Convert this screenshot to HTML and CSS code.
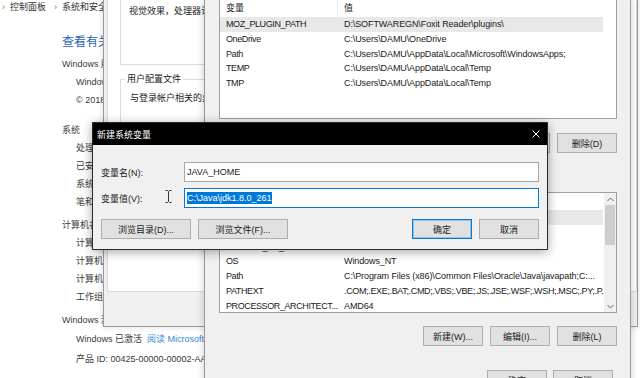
FILE: index.html
```html
<!DOCTYPE html>
<html lang="zh-CN">
<head>
  <meta charset="UTF-8">
  <meta name="viewport" content="width=device-width, initial-scale=1.0">
  <title>新建系统变量</title>
  <link rel="stylesheet" href="styles.css">
</head>
<body>

<!-- control panel page in the background -->
<div class="cp">
  <div class="crumbs"><span class="sep">›</span>控制面板<span class="sep">›</span>系统和安全<span class="sep">›</span>系统</div>
  <div class="cp-main">
    <h1>查看有关计算机的基本信息</h1>
    <div class="sec sec-win">
      <div class="sec-title">Windows 版本</div>
      <div class="item">Windows 10 专业版</div>
      <div class="item">© 2018 Microsoft Corporation。保留所有权利。</div>
    </div>
    <div class="sec sec-sys">
      <div class="sec-title">系统</div>
      <div class="item">处理器：</div>
      <div class="item">已安装的内存(RAM)：</div>
      <div class="item">系统类型：</div>
      <div class="item">笔和触控：</div>
    </div>
    <div class="sec sec-name">
      <div class="sec-title">计算机名、域和工作组设置</div>
      <div class="item">计算机名：</div>
      <div class="item">计算机全名：</div>
      <div class="item">计算机描述：</div>
      <div class="item">工作组：</div>
    </div>
    <div class="sec sec-act">
      <div class="sec-title">Windows 激活</div>
      <div class="item tall">Windows 已激活 &nbsp;<span class="link">阅读 Microsoft 软件许可条款</span></div>
      <div class="item tall">产品 ID: 00425-00000-00002-AA000</div>
    </div>
  </div>
</div>

<!-- system properties -->
<div class="win sysprops">
  <div class="tabpage">
    <div class="group group-top">
      <div class="group-text">视觉效果，处理器计划，内存使用，以及虚拟内存</div>
    </div>
    <fieldset class="group-set">
      <legend>用户配置文件</legend>
      <div class="group-text">与登录帐户相关的桌面设置</div>
    </fieldset>
  </div>
</div>

<!-- environment variables -->
<div class="win envvars">
  <div class="list list-user">
    <div class="row head"><span class="c1">变量</span><span class="c2">值</span></div>
    <div class="row sel"><span class="c1">MOZ_PLUGIN_PATH</span><span class="c2">D:\SOFTWAREGN\Foxit Reader\plugins\</span></div>
    <div class="row"><span class="c1">OneDrive</span><span class="c2">C:\Users\DAMU\OneDrive</span></div>
    <div class="row"><span class="c1">Path</span><span class="c2">C:\Users\DAMU\AppData\Local\Microsoft\WindowsApps;</span></div>
    <div class="row"><span class="c1">TEMP</span><span class="c2">C:\Users\DAMU\AppData\Local\Temp</span></div>
    <div class="row"><span class="c1">TMP</span><span class="c2">C:\Users\DAMU\AppData\Local\Temp</span></div>
  </div>
  <div class="btns">
    <button class="btn">新建(N)...</button>
    <button class="btn">编辑(E)...</button>
    <button class="btn">删除(D)</button>
  </div>
  <div class="env-label">系统变量(S)</div>
  <div class="list list-sys">
    <div class="list-body">
      <div class="row head"><span class="c1">变量</span><span class="c2">值</span></div>
      <div class="row sel"><span class="c1">ComSpec</span><span class="c2">C:\WINDOWS\system32\cmd.exe</span></div>
      <div class="row"><span class="c1">DriverData</span><span class="c2">C:\Windows\System32\Drivers\DriverData</span></div>
      <div class="row"><span class="c1">NUMBER_OF_PROCESSORS</span><span class="c2">4</span></div>
      <div class="row"><span class="c1">OS</span><span class="c2">Windows_NT</span></div>
      <div class="row"><span class="c1">Path</span><span class="c2">C:\Program Files (x86)\Common Files\Oracle\Java\javapath;C:...</span></div>
      <div class="row"><span class="c1">PATHEXT</span><span class="c2 tight">.COM;.EXE;.BAT;.CMD;.VBS;.VBE;.JS;.JSE;.WSF;.WSH;.MSC;.PY;.P...</span></div>
      <div class="row"><span class="c1">PROCESSOR_ARCHITECT...</span><span class="c2">AMD64</span></div>
    </div>
    <div class="vscroll">
      <div class="arrow"><svg width="7" height="5" viewBox="0 0 7 5"><path d="M0.5 4 L3.5 1 L6.5 4" fill="none" stroke="#606060" stroke-width="1"/></svg></div>
      <div class="thumb"></div>
      <div class="track"></div>
      <div class="arrow"><svg width="7" height="5" viewBox="0 0 7 5"><path d="M0.5 1 L3.5 4 L6.5 1" fill="none" stroke="#606060" stroke-width="1"/></svg></div>
    </div>
  </div>
  <div class="btns">
    <button class="btn">新建(W)...</button>
    <button class="btn">编辑(I)...</button>
    <button class="btn">删除(L)</button>
  </div>
  <div class="btns btns-bottom">
    <button class="btn">确定</button>
    <button class="btn">取消</button>
  </div>
</div>

<!-- new system variable dialog -->
<div class="dlg">
  <div class="dlg-title">
    <span>新建系统变量</span>
    <span class="close"><svg width="8" height="8" viewBox="0 0 8 8"><path d="M0.5 0.5 L7.5 7.5 M7.5 0.5 L0.5 7.5" stroke="#fff" stroke-width="1"/></svg></span>
  </div>
  <div class="dlg-body">
    <div class="field-row">
      <span class="field-label">变量名(N):</span>
      <div class="field">JAVA_HOME</div>
    </div>
    <div class="field-row row-value">
      <span class="field-label">变量值(V):</span>
      <div class="field focus"><span class="selected">C:\Java\jdk1.8.0_261</span></div>
      <svg class="ibeam" width="7" height="13" viewBox="0 0 7 13"><path d="M0.5 0.5 H2.5 L3.5 1.5 L4.5 0.5 H6.5 M3.5 1.5 V11.5 M0.5 12.5 H2.5 L3.5 11.5 L4.5 12.5 H6.5" fill="none" stroke="#333" stroke-width="1"/></svg>
    </div>
    <div class="dlg-btns">
      <button class="btn wide">浏览目录(D)...</button>
      <button class="btn wide">浏览文件(F)...</button>
      <span class="spacer"></span>
      <button class="btn default">确定</button>
      <button class="btn">取消</button>
    </div>
  </div>
</div>

</body>
</html>
```

FILE: styles.css
```css
body {
  margin: 0;
  width: 640px;
  height: 378px;
  overflow: hidden;
  position: relative;
  background: #fff;
  font-family: "Liberation Sans", "Noto Sans CJK SC", sans-serif;
  font-size: 9px;
  color: #1a1a1a;
}

/* control panel */
.cp {
  color: #3a3a3a;
}
.crumbs {
  height: 15px;
  line-height: 15px;
  padding-left: 2px;
  color: #333;
}
.crumbs .sep {
  color: #777;
  margin-right: 5px;
}
.crumbs .sep:not(:first-child) {
  margin-left: 8px;
}
.cp-main {
  padding-left: 62px;
  white-space: nowrap;
}
.cp-main h1 {
  margin: 17px 0 0;
  font-size: 12px;
  line-height: 20px;
  font-weight: normal;
  color: #2a64b8;
}
.sec-title {
  line-height: 18px;
}
.item {
  line-height: 18px;
  padding-left: 14px;
}
.item.tall {
  line-height: 20px;
}
.sec-win { margin-top: 3px; }
.sec-sys { margin-top: 12px; }
.sec-name { margin-top: 5px; }
.sec-act { margin-top: 5px; }
.link {
  color: #3a86d6;
}

/* windows */
.win {
  position: absolute;
  box-sizing: border-box;
  background: #f0f0f0;
  border: 1px solid #9a9a9a;
}
.sysprops {
  left: 103px;
  top: -2px;
  width: 535px;
  height: 329px;
  padding-left: 3px;
  box-shadow: 0 0 6px rgba(0, 0, 0, 0.15);
}
.tabpage {
  box-sizing: border-box;
  height: 293px;
  background: #fff;
  border: 1px solid #d9d9d9;
  border-top: none;
  padding-left: 12px;
}
.group-top {
  box-sizing: border-box;
  height: 66px;
  border: 1px solid #dcdcdc;
  border-top: none;
  padding: 5px 0 0 8px;
  width: 480px;
}
.group-text {
  line-height: 14px;
  white-space: nowrap;
}
.group-set {
  margin: 7px 0 0;
  padding: 0 0 60px 9px;
  width: 470px;
  border: 1px solid #dcdcdc;
}
.group-set legend {
  padding: 0 2px;
  margin-left: -5px;
  line-height: 14px;
}
.group-set .group-text {
  margin-top: 5px;
}

.envvars {
  left: 204px;
  top: -2px;
  width: 427px;
  height: 410px;
  padding: 0 13px 0 14px;
  display: flex;
  flex-direction: column;
  box-shadow: 0 0 8px rgba(0, 0, 0, 0.2);
}
.list {
  box-sizing: border-box;
  background: #fff;
  border: 1px solid #a0a0a0;
  overflow: hidden;
}
.list-user {
  height: 120px;
}
.list-sys {
  height: 121px;
  margin-top: 7px;
  display: flex;
}
.list-body {
  flex: 1;
  overflow: hidden;
}
.row {
  display: flex;
  width: 383px;
  height: 14.75px;
  line-height: 14.75px;
  white-space: nowrap;
}
.row.head {
  height: 17px;
  line-height: 17px;
}
.row.sel {
  background: #e8e8e8;
}
.c1 {
  box-sizing: border-box;
  width: 118px;
  flex: none;
  padding-left: 6px;
  overflow: hidden;
  letter-spacing: -0.4px;
}
.head .c1 {
  border-right: 1px solid #ececec;
  letter-spacing: 0;
}
.c2 {
  padding-left: 6px;
  letter-spacing: -0.1px;
}
.c2.tight {
  letter-spacing: -0.35px;
}
.vscroll {
  width: 12px;
  background: #f0f0f0;
  display: flex;
  flex-direction: column;
}
.vscroll .arrow {
  height: 12px;
  display: flex;
  align-items: center;
  justify-content: center;
}
.vscroll .thumb {
  height: 40px;
  margin: 0 1px;
  background: #cdcdcd;
}
.vscroll .track {
  flex: 1;
}
.env-label {
  margin-top: 18px;
  line-height: 14px;
}
.btns {
  display: flex;
  justify-content: flex-end;
  gap: 7px;
  margin-top: 14px;
}
.list-sys + .btns {
  margin-top: 13px;
}
.btns-bottom {
  margin-top: 24px;
  margin-right: 4px;
  gap: 6px;
}
.btn {
  box-sizing: border-box;
  width: 60px;
  height: 20px;
  padding: 0;
  background: #e1e1e1;
  border: 1px solid #adadad;
  font: inherit;
  color: #1a1a1a;
}
.btn.wide {
  width: 90px;
}
.btn.default {
  border-color: #0078d7;
  box-shadow: inset 0 0 0 1px rgba(0, 120, 215, 0.3);
}

/* new variable dialog */
.dlg {
  position: absolute;
  left: 92px;
  top: 122px;
  width: 456px;
  height: 128px;
  box-sizing: border-box;
  background: #f0f0f0;
  border: 1px solid #2b2b2b;
  box-shadow: 0 2px 10px rgba(0, 0, 0, 0.35);
  display: flex;
  flex-direction: column;
}
.dlg-title {
  height: 22px;
  background: #000;
  color: #fff;
  display: flex;
  align-items: center;
  justify-content: space-between;
  padding-left: 4px;
}
.dlg-title .close {
  width: 22px;
  height: 22px;
  display: flex;
  align-items: center;
  justify-content: center;
}
.dlg-body {
  padding: 17px 8px 0 8px;
}
.field-row {
  position: relative;
  display: flex;
  align-items: center;
}
.row-value {
  margin-top: 6px;
}
.field-label {
  width: 83px;
  flex: none;
}
.field {
  box-sizing: border-box;
  flex: 1;
  height: 20px;
  line-height: 18px;
  background: #fff;
  border: 1px solid #a9a9a9;
  padding-left: 2px;
  white-space: nowrap;
}
.field.focus {
  border-color: #0078d7;
}
.selected {
  background: #0078d7;
  color: #fff;
  padding: 1px 0;
}
.ibeam {
  position: absolute;
  left: 64px;
  top: 2px;
}
.dlg-btns {
  display: flex;
  gap: 7px;
  margin-top: 11px;
}
.dlg-btns .spacer {
  flex: 1;
}
```
